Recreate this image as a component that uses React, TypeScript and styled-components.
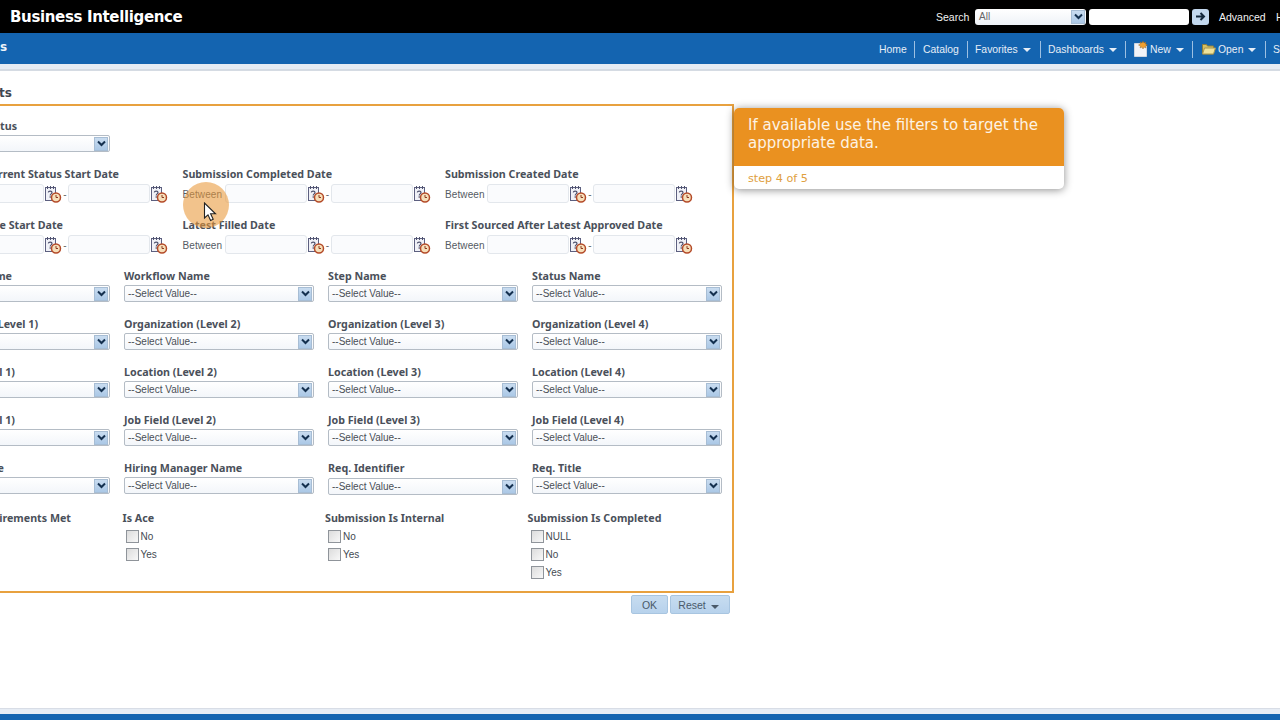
import React from 'react';
import styled, { createGlobalStyle } from 'styled-components';

const Global = createGlobalStyle`
  html, body { margin: 0; padding: 0; background: #fff; overflow: hidden; }
  #root { width: 1280px; height: 720px; }
  * { box-sizing: border-box; }
`;

const Page = styled.div`
  position: relative;
  width: 1280px;
  height: 720px;
  overflow: hidden;
  display: flex;
  flex-direction: column;
  font-family: "Noto Sans", "Liberation Sans", sans-serif;
  color: #3f4650;
`;

const Header = styled.header`
  flex: 0 0 33px;
  background: #000;
  display: flex;
  align-items: center;
  padding-left: 10px;
  color: #fff;
  white-space: nowrap;
`;
const Brand = styled.div`
  flex: none;
  font: bold 15px "DejaVu Sans", sans-serif;
  letter-spacing: -0.35px;
  width: 926px;
  padding-top: 1px;
`;
const HeaderText = styled.span<{ $w: number }>`
  width: ${p => p.$w}px;
  font: 10.5px "Liberation Sans", sans-serif;
  flex: none;
  color: #f2f2f2;
  padding-top: 1px;
`;
const SearchSelect = styled.div`
  flex: none;
  width: 111px;
  height: 16px;
  margin-right: 3px;
  background: linear-gradient(#fff, #eef2f7);
  border-radius: 3px;
  display: flex;
  align-items: center;
  justify-content: space-between;
  padding: 0 1px 0 4px;
  font: 10px "Liberation Sans", sans-serif;
  color: #666;
`;
const SearchInput = styled.div`
  flex: none;
  width: 100px;
  height: 16px;
  background: #fff;
  border-radius: 3px;
  margin-right: 3px;
`;
const GoButton = styled.div`
  flex: none;
  width: 17px;
  height: 16px;
  background: #c3d8ee;
  border-radius: 3px;
  display: flex;
  align-items: center;
  justify-content: center;
  margin-right: 10px;
`;

const Nav = styled.nav`
  flex: 0 0 31px;
  background: #1464b0;
  color: #e6eef7;
  display: flex;
  align-items: center;
  white-space: nowrap;
  font: 10.4px "Liberation Sans", sans-serif;
  padding-top: 1px;
`;
const NavTail = styled.span`
  font: bold 12px "DejaVu Sans", sans-serif;
  color: #eef4fa;
  width: 879px;
  flex: none;
  padding-bottom: 4px;
`;
const NavItem = styled.span<{ $w: number }>`
  width: ${p => p.$w}px;
  flex: none;
  display: flex;
  align-items: center;
  height: 17px;
  gap: 3px;
`;
const NavSep = styled.span<{ $after: number }>`
  flex: none;
  width: 1px;
  height: 17px;
  background: #9dc0e2;
  margin-right: ${p => p.$after}px;
`;
const Caret = styled.i`
  display: inline-block;
  width: 0;
  height: 0;
  margin-left: 2px;
  margin-top: 2px;
  border-left: 4px solid transparent;
  border-right: 4px solid transparent;
  border-top: 4px solid currentColor;
`;

const SubStrip = styled.div`
  flex: 0 0 7px;
  background: #e6ecf4;
  border-bottom: 2px solid #d5dbe3;
`;

const Main = styled.main`
  flex: 1;
  margin-left: -82px;
  min-height: 0;
`;
const Title = styled.h2`
  margin: 0;
  height: 33px;
  padding: 15px 0 0 82px;
  font: bold 12px/14px "DejaVu Sans", sans-serif;
  color: #3f4650;
  text-indent: -1px;
  letter-spacing: -0.1px;
`;
const Panel = styled.section`
  width: 816px;
  height: 489px;
  border: 2px solid #e8a13f;
  padding-top: 13px;
  display: flex;
  flex-direction: column;
  gap: 15px;
`;
const Label = styled.div`
  height: 14px;
  font: 700 10.7px/14px "Noto Sans", sans-serif;
  color: #4a505a;
  white-space: nowrap;
`;
const ClippedLabel = styled(Label)<{ $end: number }>`
  width: ${p => p.$end + 80}px;
  display: flex;
  justify-content: flex-end;
`;
const Field = styled.div`
  display: flex;
  flex-direction: column;
  gap: 2px;
  min-width: 0;
`;
const SelectBox = styled.div<{ $nudge?: boolean }>`
  height: 17px;
  width: 190px;
  ${p => p.$nudge ? 'margin-top: 1px; margin-bottom: -1px;' : ''}
  border: 1px solid #b4bcc5;
  border-radius: 2px;
  background: linear-gradient(#fff, #f3f6fa);
  display: flex;
  align-items: center;
  justify-content: space-between;
  padding: 0 1px 0 3px;
  font: 10px "Liberation Sans", sans-serif;
  color: #4a4f57;
`;
const Chevron = styled.span`
  flex: none;
  width: 14px;
  height: 14px;
  background: linear-gradient(#c9dcf0, #abc8e6);
  border: 1px solid #a7bdd4;
  display: flex;
  align-items: center;
  justify-content: center;
`;
const SelectGrid = styled.div`
  display: grid;
  grid-template-columns: repeat(4, 190px);
  column-gap: 14px;
`;
const DateGrid = styled.div`
  display: grid;
  grid-template-columns: repeat(3, 249px);
  column-gap: 13.5px;
`;
const DateField = styled.div`
  display: flex;
  flex-direction: column;
  gap: 3px;
`;
const DateRow = styled.div`
  display: flex;
  align-items: center;
  height: 19px;
`;
const Between = styled.span`
  width: 42px;
  flex: none;
  padding-top: 2px;
  font: 10px "Liberation Sans", sans-serif;
  letter-spacing: 0.1px;
  color: #555b63;
`;
const DateInput = styled.div`
  width: 82px;
  flex: none;
  height: 19px;
  border: 1px solid #e3e7ec;
  border-radius: 3px;
  background: #fafbfd;
`;
const Dash = styled.span`
  width: 6px;
  flex: none;
  padding-top: 2px;
  text-align: center;
  font: 10px "Liberation Sans", sans-serif;
  color: #666;
`;
const CheckGrid = styled.div`
  display: grid;
  grid-template-columns: repeat(4, 202.5px);
  margin-top: 2px;
`;
const CheckList = styled.div`
  display: flex;
  flex-direction: column;
  padding-left: 3px;
`;
const CheckRow = styled.label`
  display: flex;
  align-items: center;
  gap: 2px;
  height: 18px;
  font: 10px "Liberation Sans", sans-serif;
  color: #444a52;
`;
const Box = styled.span`
  flex: none;
  width: 13px;
  height: 13px;
  border: 1px solid #8f949a;
  background: linear-gradient(135deg, #dcdcdc, #f8f8f8);
`;
const Actions = styled.div`
  width: 812px;
  margin-top: 2px;
  display: flex;
  justify-content: flex-end;
  gap: 2px;
`;
const ActionButton = styled.button<{ $w: number; $shift?: number }>`
  width: ${p => p.$w}px;
  height: 19px;
  padding: 0 ${p => p.$shift ?? 0}px 0 0;
  border: 1px solid #a8c5e0;
  border-radius: 2px;
  background: linear-gradient(#c7dcf0, #b7d2ec);
  color: #4a5a6a;
  font: 10.5px "Liberation Sans", sans-serif;
`;

const Footer = styled.footer`
  flex: 0 0 12px;
  background: linear-gradient(#e6ecf4 0 5px, #1464b0 5px);
  border-top: 1px solid #d8dde6;
`;

const Spot = styled.div`
  position: absolute;
  left: 183px;
  top: 182px;
  width: 46px;
  height: 46px;
  border-radius: 50%;
  background: rgba(232, 152, 56, 0.58);
`;
const Pointer = styled.svg`
  position: absolute;
  left: 203px;
  top: 202px;
`;
const Tip = styled.aside`
  position: absolute;
  left: 734px;
  top: 108px;
  width: 330px;
  height: 81px;
  border-radius: 5px;
  overflow: hidden;
  background: #fff;
  box-shadow: 0 1px 8px rgba(0, 0, 0, 0.45);
  font-family: "DejaVu Sans", sans-serif;
`;
const TipBody = styled.div`
  height: 58px;
  background: #ea9120;
  color: #fdf3e4;
  padding: 8px 14px 0;
  font-size: 15px;
  line-height: 18px;
`;
const TipFoot = styled.div`
  padding: 5px 14px 0;
  color: #e0a040;
  font-size: 11.2px;
  line-height: 15px;
`;

const ChevronIcon = ({ color = '#14304f' }: { color?: string }) => (
  <svg width="9" height="7" viewBox="0 0 9 7"><path d="M1 1.5l3.5 3.5L8 1.5" fill="none" stroke={color} strokeWidth="2" /></svg>
);

const DateIcon = () => (
  <svg width="18" height="19" viewBox="0 0 18 19" style={{ flex: 'none' }}>
    <rect x="1.500" y="3.500" width="10" height="13" fill="#f0f1f7" stroke="#5d6080" />
    <path d="M3.500 2v3M6.500 2v3M9.500 2v3" stroke="#4f526e" strokeWidth="1" />
    <path d="M4.300 8.300c.3-1.600 3.700-1.600 3.700.3 0 1.300-1.800 1.300-1.800 2.800M6.200 12.300v1.400" fill="none" stroke="#4f526e" strokeWidth="1.200" />
    <circle cx="12" cy="13.500" r="4.500" fill="#f6dfba" stroke="#b44a28" strokeWidth="1.500" />
    <path d="M12 11v2.500h2" fill="none" stroke="#8c3a20" strokeWidth="1" />
  </svg>
);

const Select = ({ nudge, children }: { nudge?: boolean; children?: React.ReactNode }) => (
  <SelectBox $nudge={nudge}>
    <span>{children}</span>
    <Chevron><ChevronIcon /></Chevron>
  </SelectBox>
);
const V = '--Select Value--';

const DateCtl = () => (
  <DateRow>
    <Between>Between</Between>
    <DateInput />
    <DateIcon />
    <Dash>-</Dash>
    <DateInput />
    <DateIcon />
  </DateRow>
);

const selectRows: { end: number; first: string; rest: string[]; nudge?: boolean }[] = [
  { end: 12, first: 'Requisition Name', rest: ['Workflow Name', 'Step Name', 'Status Name'] },
  { end: 38, first: 'Organization (Level 1)', rest: ['Organization (Level 2)', 'Organization (Level 3)', 'Organization (Level 4)'] },
  { end: 15, first: 'Location (Level 1)', rest: ['Location (Level 2)', 'Location (Level 3)', 'Location (Level 4)'] },
  { end: 15, first: 'Job Field (Level 1)', rest: ['Job Field (Level 2)', 'Job Field (Level 3)', 'Job Field (Level 4)'] },
  { end: 4, first: 'Recruiter Name', rest: ['Hiring Manager Name', 'Req. Identifier', 'Req. Title'], nudge: true },
];

const checks = [
  { title: 'Minimum Requirements Met', end: 71, items: [] as string[] },
  { title: 'Is Ace', items: ['No', 'Yes'] },
  { title: 'Submission Is Internal', items: ['No', 'Yes'] },
  { title: 'Submission Is Completed', items: ['NULL', 'No', 'Yes'] },
];

export default function App() {
  return (
    <Page>
      <Global />
      <Header>
        <Brand>Business Intelligence</Brand>
        <HeaderText $w={39}>Search</HeaderText>
        <SearchSelect>All<Chevron><ChevronIcon /></Chevron></SearchSelect>
        <SearchInput />
        <GoButton>
          <svg width="11" height="9" viewBox="0 0 11 9"><path d="M1 4.500h7M5.500 1l3.500 3.500L5.500 8" fill="none" stroke="#14283c" strokeWidth="2" /></svg>
        </GoButton>
        <HeaderText $w={57}>Advanced</HeaderText>
        <HeaderText $w={20}>Help</HeaderText>
      </Header>
      <Nav>
        <NavTail>s</NavTail>
        <NavItem $w={35}>Home</NavItem>
        <NavSep $after={8} />
        <NavItem $w={44}>Catalog</NavItem>
        <NavSep $after={7} />
        <NavItem $w={65}>Favorites <Caret /></NavItem>
        <NavSep $after={7} />
        <NavItem $w={77}>Dashboards <Caret /></NavItem>
        <NavSep $after={8} />
        <NavItem $w={58}>
          <svg width="14" height="16" viewBox="0 0 14 16" style={{ marginRight: -1 }}><path d="M.500 2.500h9l3 3v10H.500z" fill="#f1f3f8" stroke="#cfd6e0" /><path d="M9 0l1 2 2-1-.500 2 2 1-2 1 .500 2-2-1-1 2-1-2-2 1 .500-2-2-1 2-1L6 1l2 1z" fill="#f0a030" stroke="#8a5a1a" strokeWidth=".4" /></svg>
          New <Caret />
        </NavItem>
        <NavSep $after={9} />
        <NavItem $w={63}>
          <svg width="14" height="12" viewBox="0 0 14 12" style={{ marginRight: -1 }}><path d="M.500 11V1.500h4l1 1.500h6v8z" fill="#d6c064" stroke="#8d7d3a" /><path d="M.500 11l2-6h11l-2 6z" fill="#f0e39c" stroke="#a8964e" /></svg>
          Open <Caret />
        </NavItem>
        <NavSep $after={7} />
        <NavItem $w={30}>Sign Out</NavItem>
      </Nav>
      <SubStrip />
      <Main>
        <Title>ts</Title>
        <Panel>
          <Field>
            <ClippedLabel $end={17}>Submission Status</ClippedLabel>
            <Select />
          </Field>
          <DateGrid>
            <DateField>
              <ClippedLabel $end={119}>Submission Current Status Start Date</ClippedLabel>
              <DateCtl />
            </DateField>
            <DateField>
              <Label>Submission Completed Date</Label>
              <DateCtl />
            </DateField>
            <DateField>
              <Label>Submission Created Date</Label>
              <DateCtl />
            </DateField>
          </DateGrid>
          <DateGrid>
            <DateField>
              <ClippedLabel $end={63}>Candidate Start Date</ClippedLabel>
              <DateCtl />
            </DateField>
            <DateField>
              <Label>Latest Filled Date</Label>
              <DateCtl />
            </DateField>
            <DateField>
              <Label>First Sourced After Latest Approved Date</Label>
              <DateCtl />
            </DateField>
          </DateGrid>
          {selectRows.map(r => (
            <SelectGrid key={r.first}>
              <Field>
                <ClippedLabel $end={r.end}>{r.first}</ClippedLabel>
                <Select />
              </Field>
              {r.rest.map(t => (
                <Field key={t}>
                  <Label>{t}</Label>
                  <Select nudge={r.nudge && t === 'Req. Identifier'}>{V}</Select>
                </Field>
              ))}
            </SelectGrid>
          ))}
          <CheckGrid>
            {checks.map(c => (
              <Field key={c.title}>
                {c.end ? <ClippedLabel $end={c.end}>{c.title}</ClippedLabel> : <Label>{c.title}</Label>}
                <CheckList>
                  {c.items.map(i => (
                    <CheckRow key={i}><Box />{i}</CheckRow>
                  ))}
                </CheckList>
              </Field>
            ))}
          </CheckGrid>
        </Panel>
        <Actions>
          <ActionButton $w={37}>OK</ActionButton>
          <ActionButton $w={60} $shift={3}>Reset <Caret /></ActionButton>
        </Actions>
      </Main>
      <Footer />
      <Spot />
      <Pointer width="15" height="20" viewBox="0 0 15 20">
        <path d="M1.500 1v15l3.500-3.200 2.600 5.700 2.600-1.200-2.600-5.500h4.900z" fill="#fff" stroke="#222" strokeWidth="1.100" />
      </Pointer>
      <Tip>
        <TipBody>If available use the filters to target the appropriate data.</TipBody>
        <TipFoot>step 4 of 5</TipFoot>
      </Tip>
    </Page>
  );
}
